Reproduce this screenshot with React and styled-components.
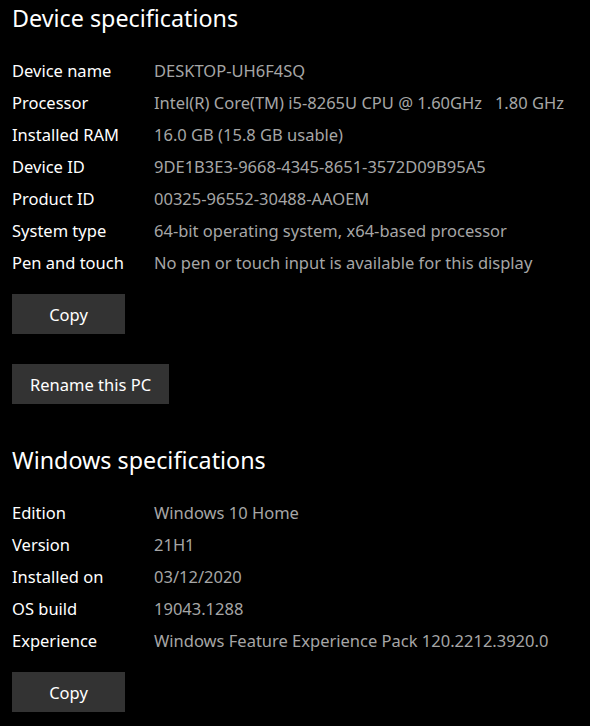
import styled, { createGlobalStyle } from 'styled-components';

const GlobalStyle = createGlobalStyle`
    html, body {
        margin: 0;
        padding: 0;
        background: #000;
    }
    body {
        font-family: "Noto Sans", "Open Sans", sans-serif;
        color: #fff;
    }
`;

const Page = styled.div`
    display: flex;
    flex-direction: column;
    padding: 0 12px;
    width: 590px;
    box-sizing: border-box;
    min-height: 726px;
    background: #000;
`;

const Heading = styled.h2`
    margin: ${props => props.$top}px 0 0;
    font-size: 23.3px;
    font-weight: 400;
    line-height: 36px;
    color: #fff;
`;

const SpecList = styled.dl`
    display: grid;
    grid-template-columns: 142px 1fr;
    grid-auto-rows: 32px;
    align-items: center;
    margin: 18px 0 0;
    font-size: 16.5px;

    dt {
        color: #fff;
        white-space: nowrap;
    }

    dd {
        margin: 0;
        color: #a6a6a6;
        white-space: pre;
    }
`;

const Button = styled.button`
    align-self: flex-start;
    margin-top: ${props => props.$top}px;
    height: 40px;
    min-width: 113px;
    padding: 0 18px;
    border: none;
    background: #333;
    color: #fff;
    font-family: inherit;
    font-size: 16.5px;
    cursor: pointer;

    &:hover {
        background: #454545;
    }
`;

const device = [
    ['Device name', 'DESKTOP-UH6F4SQ'],
    ['Processor', 'Intel(R) Core(TM) i5-8265U CPU @ 1.60GHz   1.80 GHz'],
    ['Installed RAM', '16.0 GB (15.8 GB usable)'],
    ['Device ID', '9DE1B3E3-9668-4345-8651-3572D09B95A5'],
    ['Product ID', '00325-96552-30488-AAOEM'],
    ['System type', '64-bit operating system, x64-based processor'],
    ['Pen and touch', 'No pen or touch input is available for this display'],
];

const windows = [
    ['Edition', 'Windows 10 Home'],
    ['Version', '21H1'],
    ['Installed on', '03/12/2020'],
    ['OS build', '19043.1288'],
    ['Experience', 'Windows Feature Experience Pack 120.2212.3920.0'],
];

const Specs = ({ items }) => (
    <SpecList>
        {items.map(([label, value]) => (
            <>
                <dt key={label}>{label}</dt>
                <dd key={label + '-v'}>{value}</dd>
            </>
        ))}
    </SpecList>
);

const App = () => {
    return (
        <Page>
            <GlobalStyle />
            <Heading $top={0}>Device specifications</Heading>
            <Specs items={device} />
            <Button $top={16}>Copy</Button>
            <Button $top={30}>Rename this PC</Button>
            <Heading $top={38}>Windows specifications</Heading>
            <Specs items={windows} />
            <Button $top={16}>Copy</Button>
        </Page>
    );
};

export default App;
